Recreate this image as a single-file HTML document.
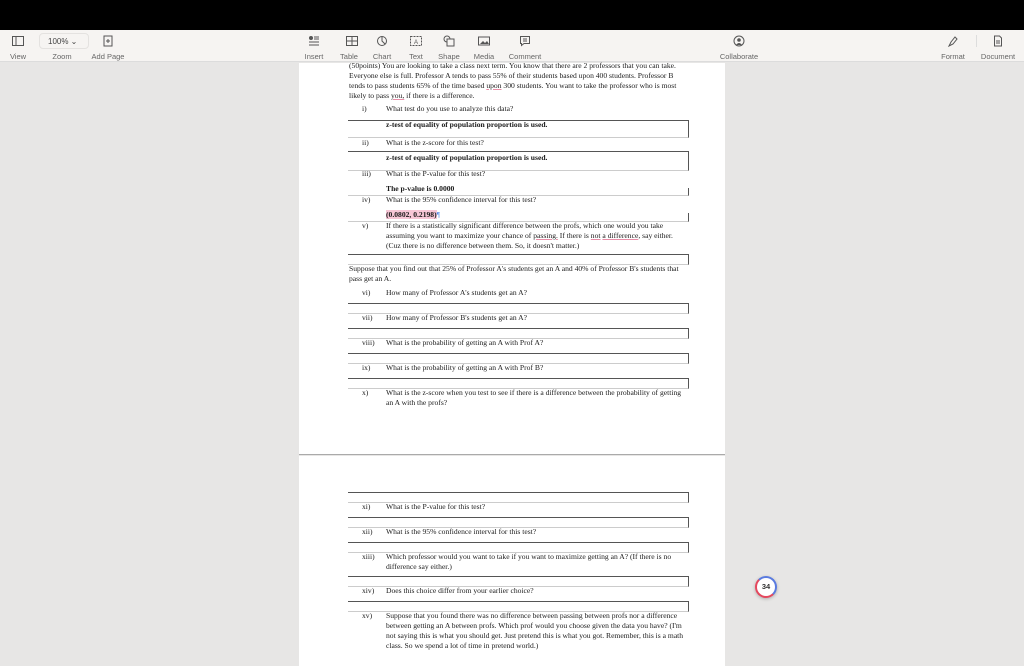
<!DOCTYPE html>
<html><head><meta charset="utf-8"><style>
*{margin:0;padding:0;box-sizing:border-box}
body{width:1024px;height:666px;overflow:hidden;background:#e7e6e5;position:relative;font-family:"Liberation Serif",serif;color:#222}
#top{position:absolute;left:0;top:0;width:1024px;height:30px;background:#000}
#tb{position:absolute;left:0;top:30px;width:1024px;height:32px;background:#f6f4f2;border-bottom:1px solid #dcdcdc}
.lb{position:absolute;top:22px;font-family:"Liberation Sans",sans-serif;font-size:7.5px;color:#666;transform:translateX(-50%);white-space:nowrap}
.ic{position:absolute;top:5px;width:14px;height:12px;transform:translateX(-50%)}
.pg{position:absolute;left:299px;width:426px;background:#fff}
.t{position:absolute;font-size:7.6px;white-space:nowrap;color:#1a1a1a;line-height:10px}
.b{font-weight:bold}
.box{position:absolute;left:348px;width:341px;height:11px;border-top:1px solid #555;border-right:1px solid #555;border-bottom:1px solid #ccc}
.u{text-decoration:underline;text-decoration-color:#e98ea8}
</style></head><body>
<div id="top"></div>
<div id="tb">
<svg class="ic" style="left:18px" viewBox="0 0 14 12"><rect x="1.5" y="1.5" width="11" height="9" fill="none" stroke="#555"/><line x1="5" y1="2" x2="5" y2="10" stroke="#555"/></svg>
<div style="position:absolute;left:39px;top:3px;width:50px;height:16px;border:1px solid #e4e2e0;border-radius:4px;font-family:'Liberation Sans',sans-serif;font-size:8px;color:#444;padding:3px 0 0 8px">100% ⌄</div>
<svg class="ic" style="left:108px" viewBox="0 0 14 12"><rect x="3" y="1" width="8" height="10" fill="none" stroke="#555"/><line x1="5" y1="6" x2="9" y2="6" stroke="#555"/><line x1="7" y1="4" x2="7" y2="8" stroke="#555"/></svg>
<svg class="ic" style="left:314px" viewBox="0 0 14 12"><circle cx="4" cy="3" r="2" fill="#555"/><line x1="7" y1="2" x2="12" y2="2" stroke="#555"/><line x1="7" y1="4" x2="12" y2="4" stroke="#555"/><line x1="2" y1="7" x2="12" y2="7" stroke="#555"/><line x1="2" y1="10" x2="12" y2="10" stroke="#555"/></svg>
<svg class="ic" style="left:352px" viewBox="0 0 14 12"><rect x="1.5" y="1.5" width="11" height="9" fill="none" stroke="#555"/><line x1="1.5" y1="6" x2="12.5" y2="6" stroke="#555"/><line x1="7" y1="1.5" x2="7" y2="10.5" stroke="#555"/></svg>
<svg class="ic" style="left:382px" viewBox="0 0 14 12"><circle cx="7" cy="6" r="4.5" fill="none" stroke="#555"/><path d="M7 1.5V6L10 9" fill="none" stroke="#555"/></svg>
<svg class="ic" style="left:416px" viewBox="0 0 14 12"><rect x="1.5" y="1.5" width="11" height="9" fill="none" stroke="#555" stroke-dasharray="2 1"/><text x="7" y="9" font-size="6" text-anchor="middle" fill="#555" font-family="Liberation Sans">A</text></svg>
<svg class="ic" style="left:449px" viewBox="0 0 14 12"><circle cx="5" cy="4" r="3" fill="none" stroke="#555"/><rect x="5" y="4" width="7" height="7" fill="#f6f4f2" stroke="#555"/></svg>
<svg class="ic" style="left:484px" viewBox="0 0 14 12"><rect x="1.5" y="2" width="11" height="8" fill="none" stroke="#555"/><path d="M3 9L6 6L8 8L10 6L12 9Z" fill="#555"/></svg>
<svg class="ic" style="left:525px" viewBox="0 0 14 12"><path d="M2.5 1.5H11.5V8.5H6L3.5 10.5V8.5H2.5Z" fill="none" stroke="#555"/><line x1="5" y1="4" x2="9" y2="4" stroke="#555"/><line x1="5" y1="6" x2="9" y2="6" stroke="#555"/></svg>
<svg class="ic" style="left:739px" viewBox="0 0 14 12"><circle cx="7" cy="6" r="5" fill="none" stroke="#555"/><circle cx="7" cy="5" r="1.8" fill="#555"/><path d="M4 10Q7 6 10 10" fill="#555"/></svg>
<svg class="ic" style="left:953px" viewBox="0 0 14 12"><path d="M3 11L5 7L9 2L11 4L7 9Z" fill="none" stroke="#555"/></svg>
<div style="position:absolute;left:976px;top:5px;width:1px;height:12px;background:#ddd"></div>
<svg class="ic" style="left:998px" viewBox="0 0 14 12"><path d="M3.5 1H8.5L10.5 3V11H3.5Z" fill="none" stroke="#555"/><line x1="5" y1="6" x2="9" y2="6" stroke="#555"/><line x1="5" y1="8" x2="9" y2="8" stroke="#555"/></svg>
<div class="lb" style="left:18px">View</div><div class="lb" style="left:62px">Zoom</div><div class="lb" style="left:108px">Add Page</div>
<div class="lb" style="left:314px">Insert</div><div class="lb" style="left:349px">Table</div><div class="lb" style="left:382px">Chart</div><div class="lb" style="left:416px">Text</div><div class="lb" style="left:449px">Shape</div><div class="lb" style="left:484px">Media</div><div class="lb" style="left:525px">Comment</div>
<div class="lb" style="left:739px">Collaborate</div><div class="lb" style="left:953px">Format</div><div class="lb" style="left:998px">Document</div>
</div>
<div class="pg" style="top:63px;height:391px"></div>
<div style="position:absolute;left:299px;top:454px;width:426px;height:1px;background:#aaa"></div>
<div class="pg" style="top:456px;height:210px"></div>

<div class="t" style="left:349px;top:61px">(50points) You are looking to take a class next term. You know that there are 2 professors that you can take.</div>
<div class="t" style="left:349px;top:71px">Everyone else is full. Professor A tends to pass 55% of their students based upon 400 students. Professor B</div>
<div class="t" style="left:349px;top:81px">tends to pass students 65% of the time based <span class="u">upon</span> 300 students. You want to take the professor who is most</div>
<div class="t" style="left:349px;top:91px">likely to pass <span class="u">you,</span> if there is a difference.</div>

<div class="t" style="left:362px;top:104px">i)</div><div class="t" style="left:386px;top:104px">What test do you use to analyze this data?</div>
<div class="box" style="top:120px;height:18px"></div>
<div class="t b" style="left:386px;top:120px">z-test of equality of population proportion is used.</div>
<div class="t" style="left:362px;top:138px">ii)</div><div class="t" style="left:386px;top:138px">What is the z-score for this test?</div>
<div class="box" style="top:151px;height:20px"></div>
<div class="t b" style="left:386px;top:153px">z-test of equality of population proportion is used.</div>
<div class="t" style="left:362px;top:169px">iii)</div><div class="t" style="left:386px;top:169px">What is the P-value for this test?</div>
<div class="box" style="top:188px;height:8px;border-top:none"></div>
<div class="t b" style="left:386px;top:184px">The p-value is 0.0000</div>
<div class="t" style="left:362px;top:195px">iv)</div><div class="t" style="left:386px;top:195px">What is the 95% confidence interval for this test?</div>
<div class="box" style="top:213px;height:9px;border-top:none"></div>
<div class="t b" style="left:386px;top:210px"><span style="background:#f7c6d6">(0.0802, 0.2198)</span><span style="color:#5b8ee6;font-weight:normal">¶</span></div>
<div class="t" style="left:362px;top:221px">v)</div>
<div class="t" style="left:386px;top:221px">If there is a statistically significant difference between the profs, which one would you take</div>
<div class="t" style="left:386px;top:231px">assuming you want to maximize your chance of <span class="u">passing.</span> If there is <span class="u">not</span> <span class="u">a difference</span>, say either.</div>
<div class="t" style="left:386px;top:241px">(Cuz there is no difference between them. So, it doesn't matter.)</div>
<div class="box" style="top:254px"></div>
<div class="t" style="left:349px;top:264px">Suppose that you find out that 25% of Professor A's students get an A and 40% of Professor B's students that</div>
<div class="t" style="left:349px;top:274px">pass get an A.</div>

<div class="t" style="left:362px;top:288px">vi)</div><div class="t" style="left:386px;top:288px">How many of Professor A's students get an A?</div>
<div class="box" style="top:303px"></div>
<div class="t" style="left:362px;top:313px">vii)</div><div class="t" style="left:386px;top:313px">How many of Professor B's students get an A?</div>
<div class="box" style="top:328px"></div>
<div class="t" style="left:362px;top:338px">viii)</div><div class="t" style="left:386px;top:338px">What is the probability of getting an A with Prof A?</div>
<div class="box" style="top:353px"></div>
<div class="t" style="left:362px;top:363px">ix)</div><div class="t" style="left:386px;top:363px">What is the probability of getting an A with Prof B?</div>
<div class="box" style="top:378px"></div>
<div class="t" style="left:362px;top:388px">x)</div><div class="t" style="left:386px;top:388px">What is the z-score when you test to see if there is a difference between the probability of getting</div>
<div class="t" style="left:386px;top:398px">an A with the profs?</div>

<div class="box" style="top:492px"></div>
<div class="t" style="left:362px;top:502px">xi)</div><div class="t" style="left:386px;top:502px">What is the P-value for this test?</div>
<div class="box" style="top:517px"></div>
<div class="t" style="left:362px;top:527px">xii)</div><div class="t" style="left:386px;top:527px">What is the 95% confidence interval for this test?</div>
<div class="box" style="top:542px"></div>
<div class="t" style="left:362px;top:552px">xiii)</div><div class="t" style="left:386px;top:552px">Which professor would you want to take if you want to maximize getting an A? (If there is no</div>
<div class="t" style="left:386px;top:562px">difference say either.)</div>
<div class="box" style="top:576px"></div>
<div class="t" style="left:362px;top:586px">xiv)</div><div class="t" style="left:386px;top:586px">Does this choice differ from your earlier choice?</div>
<div class="box" style="top:601px"></div>
<div class="t" style="left:362px;top:611px">xv)</div>
<div class="t" style="left:386px;top:611px">Suppose that you found there was no difference between passing between profs nor a difference</div>
<div class="t" style="left:386px;top:621px">between getting an A between profs. Which prof would you choose given the data you have? (I'm</div>
<div class="t" style="left:386px;top:631px">not saying this is what you should get. Just pretend this is what you got. Remember, this is a math</div>
<div class="t" style="left:386px;top:641px">class. So we spend a lot of time in pretend world.)</div>

<div style="position:absolute;left:755px;top:576px;width:22px;height:22px;border-radius:50%;background:#fff;border:2px solid #e5485e;border-top-color:#5a7be0;border-right-color:#5a7be0;box-shadow:0 1px 3px rgba(0,0,0,.25);font-family:'Liberation Sans',sans-serif;font-size:7.5px;font-weight:bold;color:#333;text-align:center;line-height:18px">34</div>
</body></html>
